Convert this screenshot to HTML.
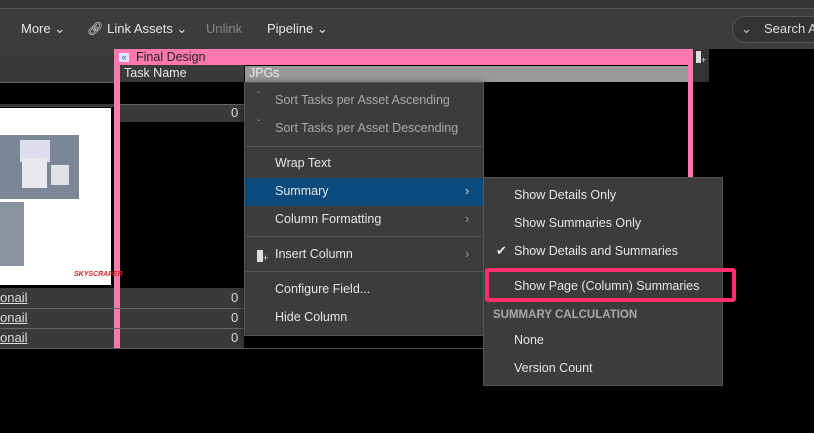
<!DOCTYPE html><html><head><style>
*{margin:0;padding:0;box-sizing:border-box}
body{width:814px;height:433px;background:#000;font-family:"Liberation Sans",sans-serif;position:relative;overflow:hidden;color:#ddd;font-size:13px}
.a{position:absolute}
.t{position:absolute;white-space:nowrap}
.mi{position:absolute;left:30px;white-space:nowrap;font-size:12.5px;color:#e6e6e6}
.dv{position:absolute;left:0;right:0;height:1px;background:#555}
</style></head><body>
<div class="a" style="left:0;top:0;width:814px;height:8px;background:#333"></div>
<div class="a" style="left:0;top:8px;width:814px;height:1px;background:#555"></div>
<div class="a" style="left:0;top:9px;width:814px;height:40px;background:#3c3c3c"></div>
<div class="t" style="left:21px;top:21px;color:#e8e8e8">More ⌄</div>
<div class="t" style="left:87px;top:21px;color:#e8e8e8">🔗︎ Link Assets ⌄</div>
<div class="t" style="left:206px;top:21px;color:#888">Unlink</div>
<div class="t" style="left:267px;top:21px;color:#e8e8e8">Pipeline ⌄</div>
<div class="a" style="left:732px;top:16px;width:100px;height:27px;border-radius:14px;background:#333;border:1px solid #555"></div>
<div class="t" style="left:741px;top:21px;color:#ccc">⌄</div>
<div class="t" style="left:764px;top:21px;color:#ddd">Search A</div>
<!-- grid -->
<div class="a" style="left:0;top:49px;width:114px;height:34px;background:#3a3a3a;border-bottom:1px solid #666"></div>
<div class="a" style="left:114px;top:49px;width:580px;height:16px;background:#ff78ae"></div>
<div class="a" style="left:119px;top:53px;width:10px;height:9px;background:#dfe6ff;color:#3355cc;font-size:9px;line-height:9px;text-align:center">«</div>
<div class="t" style="left:136px;top:50px;color:#222;font-size:12.5px">Final Design</div>
<div class="a" style="left:114px;top:65px;width:6px;height:283px;background:#ff78ae"></div>
<div class="a" style="left:688px;top:65px;width:5px;height:283px;background:#ff78ae"></div>
<div class="a" style="left:120px;top:65px;width:124px;height:17px;background:#3a3a3a"></div>
<div class="t" style="left:124px;top:66px;color:#e8e8e8;font-size:12.5px">Task Name</div>
<div class="a" style="left:245px;top:66px;width:443px;height:16px;background:#999"></div>
<div class="t" style="left:249px;top:66px;color:#eee;font-size:12.5px">JPGs</div>
<div class="a" style="left:693px;top:49px;width:16px;height:33px;background:#333"></div>
<div class="a" style="left:696px;top:51px;width:5px;height:12px;background:#ddd"></div>
<div class="t" style="left:701px;top:55px;color:#ddd;font-size:9px">+</div>
<div class="a" style="left:120px;top:104px;width:124px;height:18px;background:#3a3a3a;border-top:1px solid #666"></div>
<div class="t" style="left:231px;top:105px;color:#ddd">0</div>
<div class="a" style="left:0;top:104px;width:114px;height:3px;background:#3a3a3a"></div>
<div class="a" style="left:0;top:108px;width:111px;height:177px;background:#fff"></div>
<div class="a" style="left:0;top:135px;width:79px;height:64px;background:#7b8796"></div>
<div class="a" style="left:20px;top:140px;width:30px;height:22px;background:#dde"></div>
<div class="a" style="left:22px;top:158px;width:25px;height:30px;background:#e8e8ee"></div>
<div class="a" style="left:51px;top:165px;width:18px;height:20px;background:#e0e0e6"></div>
<div class="a" style="left:0;top:202px;width:24px;height:64px;background:#8a94a0"></div>
<div class="t" style="left:74px;top:271px;color:#d22;font-size:7px;font-style:italic;font-weight:bold">SKYSCRAPER</div>
<div class="a" style="left:0;top:288px;width:114px;height:60px;background:#3a3a3a"></div>
<div class="a" style="left:120px;top:288px;width:124px;height:60px;background:#3a3a3a"></div>
<div class="a" style="left:0;top:308px;width:244px;height:1px;background:#666"></div>
<div class="a" style="left:0;top:328px;width:244px;height:1px;background:#666"></div>
<div class="a" style="left:0;top:348px;width:693px;height:1px;background:#555"></div>
<div class="t" style="left:0;top:290px;text-decoration:underline;color:#ddd">onail</div>
<div class="t" style="left:0;top:310px;text-decoration:underline;color:#ddd">onail</div>
<div class="t" style="left:0;top:330px;text-decoration:underline;color:#ddd">onail</div>
<div class="t" style="left:231px;top:290px">0</div>
<div class="t" style="left:231px;top:310px">0</div>
<div class="t" style="left:231px;top:330px">0</div>
<!-- menu 1 -->
<div class="a" style="left:244px;top:82px;width:240px;height:254px;background:#3c3c3c;border:1px solid #555;box-shadow:0 2px 8px rgba(0,0,0,.6)">
<div class="t" style="left:12px;top:8px;color:#999;font-size:10px">ˆ</div>
<div class="mi" style="top:10px;color:#aaa">Sort Tasks per Asset Ascending</div>
<div class="t" style="left:12px;top:36px;color:#999;font-size:10px">ˇ</div>
<div class="mi" style="top:38px;color:#aaa">Sort Tasks per Asset Descending</div>
<div class="dv" style="top:63px"></div>
<div class="mi" style="top:73px">Wrap Text</div>
<div class="a" style="left:0;top:95px;width:238px;height:28px;background:#0b4a7c"></div>
<div class="mi" style="top:101px">Summary</div><div class="t" style="left:220px;top:100px;color:#ddd">›</div>
<div class="mi" style="top:129px">Column Formatting</div><div class="t" style="left:220px;top:128px;color:#999">›</div>
<div class="dv" style="top:153px"></div>
<div class="a" style="left:12px;top:167px;width:6px;height:12px;background:#ddd"></div><div class="t" style="left:18px;top:170px;font-size:9px">+</div>
<div class="mi" style="top:164px">Insert Column</div><div class="t" style="left:220px;top:163px;color:#999">›</div>
<div class="dv" style="top:188px"></div>
<div class="mi" style="top:199px">Configure Field...</div>
<div class="mi" style="top:227px">Hide Column</div>
</div>
<!-- submenu -->
<div class="a" style="left:483px;top:177px;width:240px;height:209px;background:#3c3c3c;border:1px solid #555">
<div class="mi" style="top:10px">Show Details Only</div>
<div class="mi" style="top:38px">Show Summaries Only</div>
<div class="t" style="left:12px;top:65px;color:#eee">✔</div>
<div class="mi" style="top:66px">Show Details and Summaries</div>
<div class="mi" style="top:101px">Show Page (Column) Summaries</div>
<div class="t" style="left:9px;top:131px;color:#aaa;font-size:11.5px;font-weight:bold">SUMMARY CALCULATION</div>
<div class="mi" style="top:155px">None</div>
<div class="mi" style="top:183px">Version Count</div>
</div>
<div class="a" style="left:485px;top:268px;width:251px;height:34px;border:4px solid #ff2f6f;border-radius:3px"></div>
</body></html>
